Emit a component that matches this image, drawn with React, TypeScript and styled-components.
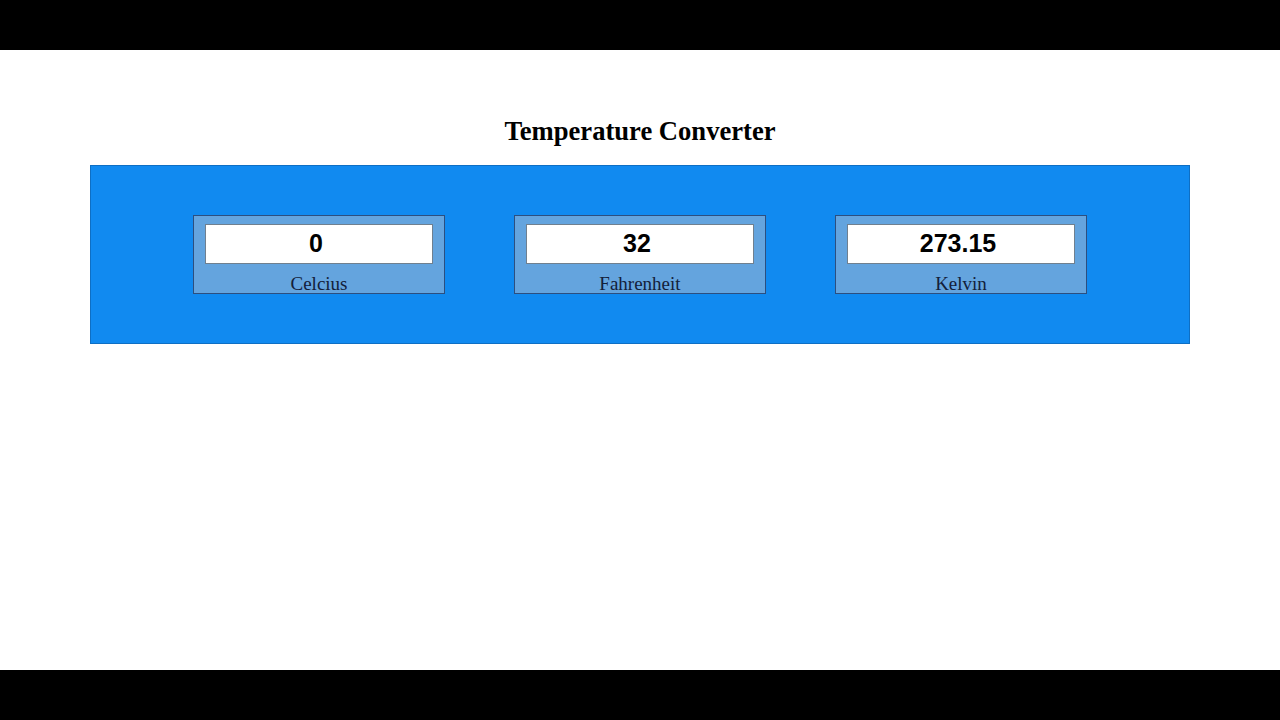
import React from "react";
import styled, { createGlobalStyle } from "styled-components";

const GlobalStyle = createGlobalStyle`
  html, body {
    margin: 0;
    padding: 0;
    background: #000;
  }
`;

const Frame = styled.div`
  width: 1280px;
  height: 720px;
  display: flex;
  flex-direction: column;
  background: #000;
`;

const Bar = styled.div`
  height: 50px;
  flex: none;
  background: #000;
`;

const Page = styled.main`
  flex: 1;
  background: #fff;
  display: flex;
  flex-direction: column;
  align-items: center;
  padding-top: 65px;
`;

const Title = styled.h1`
  margin: 0 0 18px;
  font-family: "Liberation Serif", "Times New Roman", serif;
  font-size: 26.6px;
  font-weight: bold;
  line-height: 32px;
  color: #000;
`;

const Panel = styled.section`
  width: 1100px;
  box-sizing: border-box;
  background: #118af0;
  border: 1px solid #0e6fc4;
  padding: 49px 0;
  display: flex;
  justify-content: center;
  gap: 69px;
`;

const Card = styled.div`
  width: 252px;
  height: 79px;
  box-sizing: border-box;
  background: #64a4de;
  border: 1px solid #2c4f80;
  padding: 8px 11px 0;
  display: flex;
  flex-direction: column;
  align-items: center;
`;

const Input = styled.input`
  width: 228px;
  height: 40px;
  flex: none;
  box-sizing: border-box;
  border: 1px solid #70808f;
  background: #fff;
  text-align: center;
  font-family: "Liberation Sans", Arial, sans-serif;
  font-size: 25px;
  font-weight: bold;
  color: #000;
  outline: none;
  padding: 0 6px 2px 0;
`;

const Label = styled.label`
  font-family: "Liberation Serif", "Times New Roman", serif;
  font-size: 19px;
  line-height: 22px;
  margin-top: 9px;
  color: #13203a;
`;

const units = [
  { name: "Celcius", value: "0" },
  { name: "Fahrenheit", value: "32" },
  { name: "Kelvin", value: "273.15" },
];

export default function App() {
  return (
    <>
      <GlobalStyle />
      <Frame>
        <Bar />
        <Page>
          <Title>Temperature Converter</Title>
          <Panel>
            {units.map((u) => (
              <Card key={u.name}>
                <Input defaultValue={u.value} />
                <Label>{u.name}</Label>
              </Card>
            ))}
          </Panel>
        </Page>
        <Bar />
      </Frame>
    </>
  );
}
